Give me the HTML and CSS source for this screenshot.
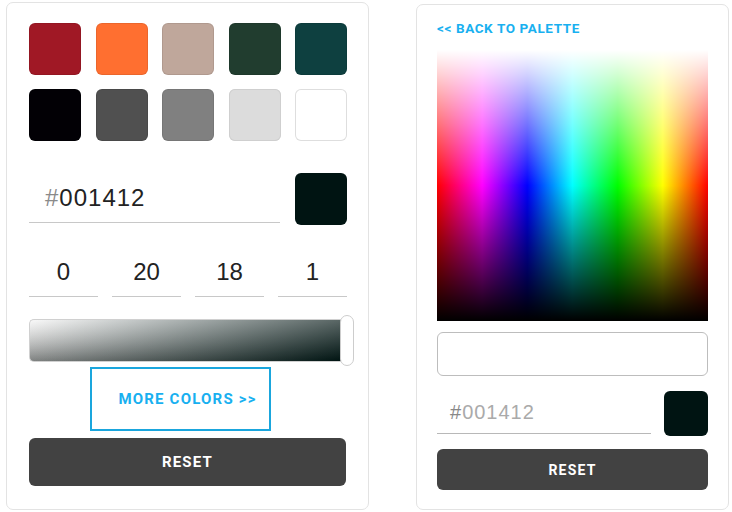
FILE: index.html
```html
<!DOCTYPE html>
<html>
<head>
<meta charset="utf-8">
<link rel="stylesheet" href="styles.css">
</head>
<body>
<div class="page">
  <div class="card card-palette">
    <div class="swatches">
      <div class="sw" style="background:#a01825"></div>
      <div class="sw" style="background:#ff6f30"></div>
      <div class="sw" style="background:#bfa79b"></div>
      <div class="sw" style="background:#213d2f"></div>
      <div class="sw" style="background:#0e4040"></div>
      <div class="sw" style="background:#020005"></div>
      <div class="sw" style="background:#505050"></div>
      <div class="sw" style="background:#808080"></div>
      <div class="sw sw-light" style="background:#dcdcdc"></div>
      <div class="sw sw-light" style="background:#ffffff"></div>
    </div>
    <div class="hex-row">
      <div class="hex-input"><span class="hash">#</span>001412</div>
      <div class="preview"></div>
    </div>
    <div class="rgba-row">
      <div class="num">0</div>
      <div class="num">20</div>
      <div class="num">18</div>
      <div class="num">1</div>
    </div>
    <div class="slider">
      <div class="track"></div>
      <div class="handle"></div>
    </div>
    <div class="more">MORE COLORS &gt;&gt;</div>
    <div class="reset">RESET</div>
  </div>

  <div class="card card-picker">
    <div class="back">&lt;&lt; BACK TO PALETTE</div>
    <div class="spectrum"></div>
    <div class="empty-box"></div>
    <div class="hex-row2">
      <div class="hex-input2"><span class="hash2">#</span>001412</div>
      <div class="preview2"></div>
    </div>
    <div class="reset reset2">RESET</div>
  </div>
</div>
</body>
</html>
```
FILE: styles.css
```css
* { box-sizing: border-box; }
html, body { margin: 0; padding: 0; background: #fff; }
body { width: 732px; height: 512px; overflow: hidden; font-family: "Liberation Sans", Arial, sans-serif; }

.page {
  display: flex;
  align-items: flex-start;
  padding-left: 6px;
  gap: 47px;
}

.card {
  background: #fff;
  border: 1px solid #e3e3e3;
  border-radius: 7px;
}

.card-palette {
  width: 363px;
  margin-top: 2px;
  padding: 20px 22px 23px 22px;
}

.swatches {
  width: 318px;
  display: grid;
  grid-template-columns: repeat(5, 52px);
  justify-content: space-between;
  row-gap: 14px;
}
.sw {
  height: 52px;
  border-radius: 6px;
  box-shadow: inset 0 0 0 1px rgba(0,0,0,0.08);
}
.sw-light { box-shadow: inset 0 0 0 1px #cfcfcf; }
.sw-light + .sw-light { box-shadow: inset 0 0 0 1px #dedede; }

.hex-row {
  width: 318px;
  margin-top: 32px;
  display: flex;
  align-items: flex-start;
  gap: 15px;
}
.hex-input {
  width: 251px;
  height: 50px;
  border-bottom: 1px solid #c8c8c8;
  padding-left: 16px;
  font-size: 24px;
  letter-spacing: 1px;
  line-height: 49px;
  color: #222;
}
.hash { color: #8a8a8a; }
.preview {
  width: 52px;
  height: 52px;
  border-radius: 6px;
  background: #001412;
}

.rgba-row {
  width: 318px;
  margin-top: 25px;
  display: flex;
  gap: 14px;
}
.num {
  flex: 1;
  height: 47px;
  border-bottom: 1px solid #c8c8c8;
  text-align: center;
  font-size: 24px;
  line-height: 44px;
  color: #222;
}

.slider {
  position: relative;
  width: 318px;
  margin-top: 22px;
  height: 43px;
}
.track {
  width: 312px;
  height: 43px;
  border-radius: 5px 0 0 5px;
  border: 1px solid #d0d0d0;
  border-right: none;
  background:
    linear-gradient(to bottom, rgba(255,255,255,0.35), rgba(255,255,255,0)),
    linear-gradient(to right, rgba(0,20,18,0), #001412),
    linear-gradient(to bottom, #f5f5f5, #7f8281);
}
.handle {
  position: absolute;
  left: 311px;
  top: -4px;
  width: 14px;
  height: 51px;
  background: #fff;
  border: 1px solid #cdcdcd;
  border-radius: 7px;
}

.more {
  width: 181px;
  height: 64px;
  margin-top: 5px;
  margin-left: 61px;
  border: 2px solid #1aa6dd;
  padding-left: 14px;
  font-family: Roboto, "Liberation Sans", sans-serif;
  font-weight: 700;
  font-size: 15px;
  letter-spacing: 1.2px;
  color: #18b0f0;
  display: flex;
  align-items: center;
  justify-content: center;
}

.reset {
  margin-top: 7px;
  height: 48px;
  border-radius: 6px;
  background: #424242;
  color: #fff;
  font-family: Roboto, "Liberation Sans", sans-serif;
  font-weight: 700;
  font-size: 15px;
  letter-spacing: 1.2px;
  display: flex;
  align-items: center;
  justify-content: center;
}

.card-picker {
  width: 313px;
  margin-top: 4px;
  padding: 13px 20px 19px 20px;
}
.back {
  height: 20px;
  line-height: 20px;
  font-family: Roboto, "Liberation Sans", sans-serif;
  font-weight: 700;
  font-size: 13.5px;
  letter-spacing: 0.6px;
  color: #18b0f0;
}
.spectrum {
  margin-top: 12px;
  height: 271px;
  background:
    linear-gradient(to bottom, #fff 0%, rgba(255,255,255,0) 50%, rgba(0,0,0,0) 50%, #000 100%),
    linear-gradient(to right, #f00 0%, #f0f 16.7%, #00f 33.3%, #0ff 50%, #0f0 66.7%, #ff0 83.3%, #f00 100%);
}
.empty-box {
  margin-top: 11px;
  height: 44px;
  border: 1px solid #bdbdbd;
  border-radius: 6px;
}
.hex-row2 {
  margin-top: 15px;
  display: flex;
  align-items: flex-start;
  gap: 13px;
}
.hex-input2 {
  width: 214px;
  height: 43px;
  border-bottom: 1px solid #b8b8b8;
  padding-left: 13px;
  font-size: 20px;
  letter-spacing: 1px;
  line-height: 43px;
  color: #aaaaaa;
}
.hash2 { color: #888; }
.preview2 {
  width: 44px;
  height: 45px;
  border-radius: 6px;
  background: #001412;
}
.reset2 {
  margin-top: 13px;
  height: 41px;
  font-size: 14px;
}
```
